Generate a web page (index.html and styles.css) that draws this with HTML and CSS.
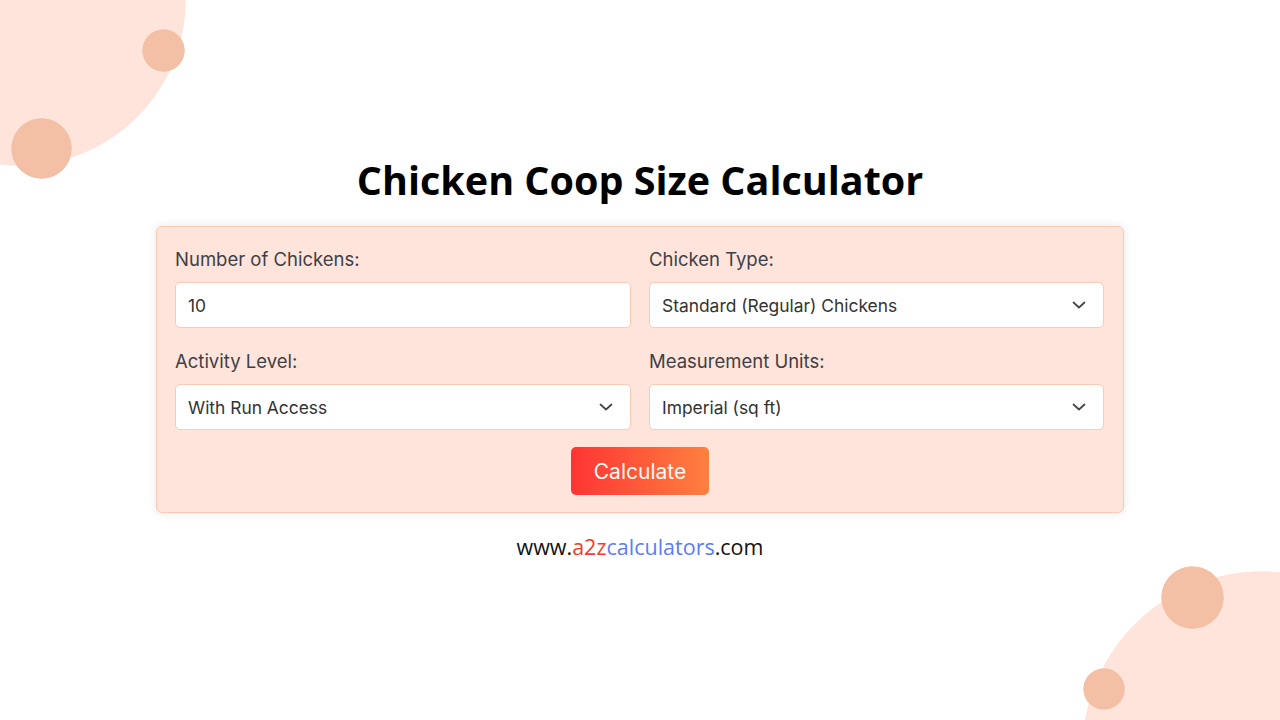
FILE: index.html
```html
<!DOCTYPE html>
<html lang="en">
<head>
<meta charset="utf-8">
<title>Chicken Coop Size Calculator</title>
<link rel="stylesheet" href="styles.css">
</head>
<body>
<div class="deco"></div>
<main class="page">
  <h1 class="title">Chicken Coop Size Calculator</h1>
  <form class="card">
    <div class="grid">
      <div class="field">
        <label class="label">Number of Chickens:</label>
        <div class="control">10</div>
      </div>
      <div class="field">
        <label class="label">Chicken Type:</label>
        <div class="control select">Standard (Regular) Chickens
          <svg class="chev" width="14" height="8" viewBox="0 0 14 8"><path d="M1.5 1.5 L7 6.5 L12.5 1.5" fill="none" stroke="#444" stroke-width="1.7" stroke-linecap="round" stroke-linejoin="round"/></svg>
        </div>
      </div>
      <div class="field">
        <label class="label">Activity Level:</label>
        <div class="control select">With Run Access
          <svg class="chev" width="14" height="8" viewBox="0 0 14 8"><path d="M1.5 1.5 L7 6.5 L12.5 1.5" fill="none" stroke="#444" stroke-width="1.7" stroke-linecap="round" stroke-linejoin="round"/></svg>
        </div>
      </div>
      <div class="field">
        <label class="label">Measurement Units:</label>
        <div class="control select">Imperial (sq ft)
          <svg class="chev" width="14" height="8" viewBox="0 0 14 8"><path d="M1.5 1.5 L7 6.5 L12.5 1.5" fill="none" stroke="#444" stroke-width="1.7" stroke-linecap="round" stroke-linejoin="round"/></svg>
        </div>
      </div>
    </div>
    <div class="actions">
      <button type="button" class="btn">Calculate</button>
    </div>
  </form>
  <p class="site">www.<span class="red">a2z</span><span class="blue">calculators</span>.com</p>
</main>
</body>
</html>
```
FILE: styles.css
```css
* { box-sizing: border-box; }
html, body { margin: 0; padding: 0; }
body {
  width: 1280px;
  height: 720px;
  overflow: hidden;
  background: #ffffff;
  position: relative;
  font-family: "Inter", "Liberation Sans", sans-serif;
}
.deco {
  position: absolute;
  left: 0;
  top: 0;
  width: 1280px;
  height: 720px;
  pointer-events: none;
  background:
    radial-gradient(circle 21.5px at 163.5px 50.5px, #f4c0a5 20.8px, rgba(244,192,165,0) 21.5px),
    radial-gradient(circle 30.5px at 41.5px 148.5px, #f4c0a5 29.8px, rgba(244,192,165,0) 30.5px),
    radial-gradient(circle 31.5px at 1192.5px 597.5px, #f4c0a5 30.8px, rgba(244,192,165,0) 31.5px),
    radial-gradient(circle 21px at 1104px 689px, #f4c0a5 20.3px, rgba(244,192,165,0) 21px),
    radial-gradient(circle 166px at 20px 0px, #fee4da 165.3px, rgba(254,228,218,0) 166px),
    radial-gradient(circle 180px at 1262px 751px, #fee4da 179.3px, rgba(254,228,218,0) 180px),
    #ffffff;
}

.page {
  position: relative;
  display: flex;
  flex-direction: column;
  align-items: center;
  padding-top: 153px;
}
.title {
  margin: 0;
  font-family: "Open Sans", "Liberation Sans", sans-serif;
  font-weight: 700;
  font-size: 39.5px;
  line-height: 54px;
  color: #000;
}
.card {
  margin-top: 19px;
  width: 968px;
  background: #fee4da;
  border: 1px solid #fbcab6;
  border-radius: 6px;
  padding: 20px 18px 17px;
  box-shadow: 0 0 10px rgba(0, 0, 0, 0.10);
}
.grid {
  display: grid;
  grid-template-columns: 456px 455px;
  column-gap: 18px;
  row-gap: 21px;
}
.field { display: flex; flex-direction: column; }
.label {
  font-size: 18.5px;
  line-height: 24px;
  color: #3f3f46;
  margin-bottom: 11px;
}
.control {
  height: 46px;
  background: #fff;
  border: 1px solid #fbcab6;
  border-radius: 5px;
  padding: 0 12px;
  display: flex;
  align-items: center;
  justify-content: space-between;
  font-size: 17.4px;
  color: #333;
}
.chev { flex: none; margin-right: 5px; }
.actions {
  display: flex;
  justify-content: center;
  margin-top: 17px;
}
.btn {
  width: 138px;
  height: 48px;
  border: none;
  border-radius: 5px;
  background: linear-gradient(90deg, #ff3434 0%, #ff8040 100%);
  color: #fff7f2;
  font-family: "Inter", "Liberation Sans", sans-serif;
  font-size: 21px;
  padding: 0;
}
.site {
  margin: 20px 0 0;
  font-family: "Open Sans", "Liberation Sans", sans-serif;
  font-size: 21.5px;
  line-height: 28px;
  color: #111;
}
.red { color: #f33a2c; }
.blue { color: #5b7cf3; }
```
